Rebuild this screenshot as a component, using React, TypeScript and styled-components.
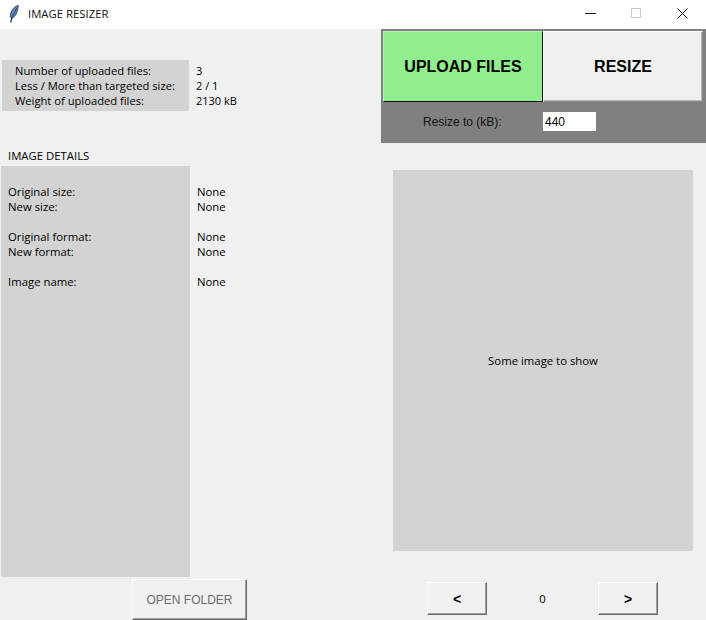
import React from "react";
import styled, { createGlobalStyle } from "styled-components";

const Global = createGlobalStyle`
  html, body { margin: 0; padding: 0; background: #f0f0f0; }
  body { font-family: "Open Sans", "Noto Sans", sans-serif; color: #000; overflow: hidden; }
`;
const Windowed = styled.div`
  width: 706px; height: 620px; display: flex; flex-direction: column; overflow: hidden; background: #f0f0f0;
  font-size: 11.35px; line-height: 15px;
`;
const TitleBar = styled.header`
  box-sizing: border-box; height: 29px; flex: none; background: #fff; display: flex; align-items: center;
  padding: 0 1px 2px 9px;
`;
const AppTitle = styled.span`
  margin-left: 9px; color: #111; flex: 1;
`;
const WinButton = styled.div`
  width: 46px; height: 27px; display: flex; align-items: center; justify-content: center; flex: none;
`;
const Body = styled.main`
  flex: 1; display: grid; grid-template-columns: 381px 325px; min-height: 0;
`;
const LeftColumn = styled.section`
  display: flex; flex-direction: column; min-height: 0;
`;
const Summary = styled.div`
  display: flex; margin: 31px 0 0 2px; height: 51px;
`;
const SummaryLabels = styled.div`
  width: 174px; padding: 3px 0 3px 13px; background: #d3d3d3; font-size: 11.2px;
`;
const SummaryValues = styled.div`
  padding: 3px 0 0 7px; font-size: 11px;
`;
const Heading = styled.div`
  margin: 37px 0 0 8px; height: 18px; line-height: 16px;
`;
const Details = styled.div`
  display: grid; grid-template-columns: 189px 1fr; margin-left: 1px; height: 411px;
`;
const DetailLabels = styled.div`
  background: #d3d3d3; padding: 18px 0 0 7px;
`;
const DetailValues = styled.div`
  padding: 18px 0 0 7px;
`;
const Line = styled.div<{ $gap?: boolean }>`
  height: 15px; margin-top: ${(p) => (p.$gap ? "15px" : "0")}; white-space: nowrap;
`;
const LeftFooter = styled.div`
  padding: 2px 0 0 132px;
`;
const RaisedButton = styled.button`
  box-sizing: border-box; background: #f0f0f0; padding: 0; cursor: pointer;
  border: 1px solid; border-color: #fff #696969 #696969 #fff;
  box-shadow: inset -1px -1px 0 #a0a0a0;
  display: flex; align-items: center; justify-content: center;
`;
const OpenFolder = styled(RaisedButton)`
  width: 115px; height: 41px;
  font: 12px "Liberation Sans", Arial, sans-serif; color: #6d6d6d;
`;
const RightColumn = styled.section`
  display: flex; flex-direction: column; min-height: 0;
`;
const Controls = styled.div`
  background: #808080; height: 114px; padding: 2px 3px 0 2px; box-sizing: border-box; flex: none;
`;
const BigButtons = styled.div`
  display: grid; grid-template-columns: 160px 160px; height: 71px;
`;
const BigButton = styled(RaisedButton)<{ $active?: boolean }>`
  font: bold 16px "Liberation Sans", Arial, sans-serif; color: #000;
  height: 71px;
  background: ${(p) => (p.$active ? "#90ee90" : "#f0f0f0")};
  border-color: ${(p) =>
    p.$active ? "#b5f3b5 #111 #111 #b5f3b5" : "#fff #8c8c8c #8c8c8c #fff"};
  box-shadow: ${(p) => (p.$active ? "none" : "inset -1px -1px 0 #b4b4b4")};
`;
const ResizeRow = styled.div`
  display: flex; align-items: center; height: 39px;
`;
const ResizeLabel = styled.label`
  width: 160px; box-sizing: border-box; padding-left: 40px;
  font: 12px "Liberation Sans", Arial, sans-serif; color: #111;
`;
const SizeInput = styled.input`
  width: 53px; height: 19px; box-sizing: border-box; border: 0; padding: 0 2px; background: #fff; outline: 0;
  font: 12px "Liberation Sans", Arial, sans-serif; color: #000;
`;
const Preview = styled.div`
  width: 300px; height: 381px; margin: 27px 0 0 12px; box-sizing: border-box; background: #d3d3d3;
  display: flex; align-items: center; justify-content: center; flex: none;
`;
const Pager = styled.div`
  display: grid; grid-template-columns: 60px 111px 60px; margin: 31px 0 0 46px;
`;
const PageNumber = styled.div`
  display: flex; align-items: center; justify-content: center;
`;
const PageButton = styled(RaisedButton)`
  height: 33px; font: bold 14px "Liberation Sans", Arial, sans-serif; color: #000;
`;

export default function App() {
  return (
    <Windowed>
      <Global />
      <TitleBar>
        <svg width="10" height="18" viewBox="0 0 10 18" aria-hidden="true">
          <path d="M9.300 0.500C5.500 1 1.500 5.500 1.300 11.500L2.700 13.500C6.500 12 9 6 9.300 0.500Z" fill="#6488bd" stroke="#1f2f4c" strokeWidth="0.800" />
          <path d="M8 3 4 10 2.600 13" fill="none" stroke="#22324e" strokeWidth="0.800" />
          <path d="M2.600 13 1.800 17.500" fill="none" stroke="#0c1420" strokeWidth="1.100" />
        </svg>
        <AppTitle>IMAGE RESIZER</AppTitle>
        <WinButton>
          <svg width="11" height="11" viewBox="0 0 11 11" aria-hidden="true"><path d="M0 5.500H11" stroke="#111" strokeWidth="1" /></svg>
        </WinButton>
        <WinButton>
          <svg width="11" height="11" viewBox="0 0 11 11" aria-hidden="true"><rect x="0.500" y="0.500" width="9" height="9" fill="none" stroke="#c8c8c8" /></svg>
        </WinButton>
        <WinButton>
          <svg width="11" height="11" viewBox="0 0 11 11" aria-hidden="true"><path d="M0.500 0.500 10.500 10.500M10.500 0.500 0.500 10.500" stroke="#111" strokeWidth="1" /></svg>
        </WinButton>
      </TitleBar>
      <Body>
        <LeftColumn>
          <Summary>
            <SummaryLabels>
              <Line>Number of uploaded files:</Line>
              <Line>Less / More than targeted size:</Line>
              <Line>Weight of uploaded files:</Line>
            </SummaryLabels>
            <SummaryValues>
              <Line>3</Line>
              <Line>2 / 1</Line>
              <Line>2130 kB</Line>
            </SummaryValues>
          </Summary>
          <Heading>IMAGE DETAILS</Heading>
          <Details>
            <DetailLabels>
              <Line>Original size:</Line>
              <Line>New size:</Line>
              <Line $gap>Original format:</Line>
              <Line>New format:</Line>
              <Line $gap>Image name:</Line>
            </DetailLabels>
            <DetailValues>
              <Line>None</Line>
              <Line>None</Line>
              <Line $gap>None</Line>
              <Line>None</Line>
              <Line $gap>None</Line>
            </DetailValues>
          </Details>
          <LeftFooter>
            <OpenFolder>OPEN FOLDER</OpenFolder>
          </LeftFooter>
        </LeftColumn>
        <RightColumn>
          <Controls>
            <BigButtons>
              <BigButton $active>UPLOAD FILES</BigButton>
              <BigButton>RESIZE</BigButton>
            </BigButtons>
            <ResizeRow>
              <ResizeLabel>Resize to (kB):</ResizeLabel>
              <SizeInput defaultValue="440" />
            </ResizeRow>
          </Controls>
          <Preview>Some image to show</Preview>
          <Pager>
            <PageButton>&lt;</PageButton>
            <PageNumber>0</PageNumber>
            <PageButton>&gt;</PageButton>
          </Pager>
        </RightColumn>
      </Body>
    </Windowed>
  );
}
